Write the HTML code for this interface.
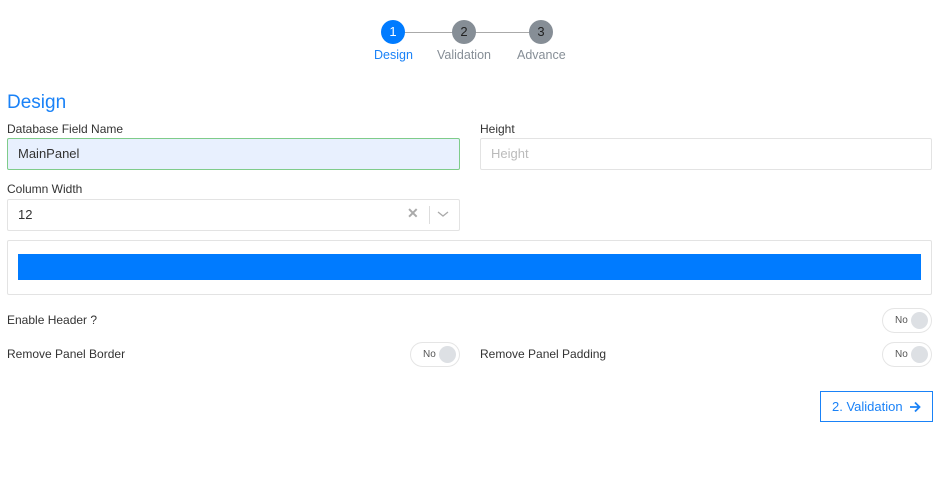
<!DOCTYPE html>
<html><head><meta charset="utf-8"><style>
*{box-sizing:border-box;margin:0;padding:0}
body{width:942px;height:501px;background:#fff;font-family:"Liberation Sans",sans-serif;color:#333;position:relative;overflow:hidden}
.a{position:absolute}
.c{width:24px;height:24px;border-radius:50%;color:#222;font-size:13px;text-align:center;line-height:24px;background:#868e96}
.sl{font-size:12.5px;color:#868e96;white-space:nowrap}
.lbl{font-size:12px;color:#333}
.inp{border:1px solid #e3e3e3;border-radius:2px;font-size:13px;padding-left:10px;line-height:30px}
.tg{width:50px;height:25px;border:1px solid #e5e5e5;border-radius:13px;font-size:10px;color:#555}
.tg span{position:absolute;left:12px;top:6px}
.tg i{position:absolute;right:3px;top:3px;width:17px;height:17px;border-radius:50%;background:#dde0e4}
</style></head><body>
<div class="a" style="left:393px;top:32px;width:148px;height:1px;background:#aaa"></div>
<div class="a c" style="left:381px;top:20px;background:#007bff;color:#fff">1</div>
<div class="a c" style="left:452px;top:20px">2</div>
<div class="a c" style="left:529px;top:20px">3</div>
<div class="a sl" style="left:374px;top:48px;color:#1a82f7">Design</div>
<div class="a sl" style="left:437px;top:48px">Validation</div>
<div class="a sl" style="left:517px;top:48px">Advance</div>

<div class="a" style="left:7px;top:92px;font-size:19px;color:#1a82f7">Design</div>
<div class="a lbl" style="left:7px;top:122px">Database Field Name</div>
<div class="a inp" style="left:7px;top:138px;width:453px;height:32px;background:#e8f0fe;border-color:#7fcc8a;color:#333">MainPanel</div>
<div class="a lbl" style="left:480px;top:122px">Height</div>
<div class="a inp" style="left:480px;top:138px;width:452px;height:32px;color:#bbb">Height</div>
<div class="a lbl" style="left:7px;top:182px">Column Width</div>
<div class="a inp" style="left:7px;top:199px;width:453px;height:32px;line-height:29px">12</div>
<div class="a" style="left:407px;top:205px;color:#aaa;font-size:14px;font-weight:bold">✕</div>
<div class="a" style="left:429px;top:206px;width:1px;height:18px;background:#ddd"></div>
<svg class="a" style="left:436px;top:208px" width="14" height="12"><path d="M2 4l5 4 5-4" fill="none" stroke="#aaa" stroke-width="1.3"/></svg>

<div class="a" style="left:7px;top:240px;width:925px;height:55px;border:1px solid #e3e3e3;border-radius:2px"></div>
<div class="a" style="left:18px;top:254px;width:903px;height:26px;background:#007bff"></div>

<div class="a lbl" style="left:7px;top:313px">Enable Header ?</div>
<div class="a tg" style="left:882px;top:308px"><span>No</span><i></i></div>
<div class="a lbl" style="left:7px;top:347px">Remove Panel Border</div>
<div class="a tg" style="left:410px;top:342px"><span>No</span><i></i></div>
<div class="a lbl" style="left:480px;top:347px">Remove Panel Padding</div>
<div class="a tg" style="left:882px;top:342px"><span>No</span><i></i></div>

<div class="a" style="left:820px;top:391px;width:113px;height:31px;border:1px solid #1a82f7;color:#1a82f7;font-size:13px;line-height:29px;padding-left:11px">2. Validation <svg style="vertical-align:-2px;margin-left:3px" width="12" height="12"><path d="M1 6h10M6 1.5l4.5 4.5L6 10.5" fill="none" stroke="#1a82f7" stroke-width="1.8"/></svg></div>
</body></html>
